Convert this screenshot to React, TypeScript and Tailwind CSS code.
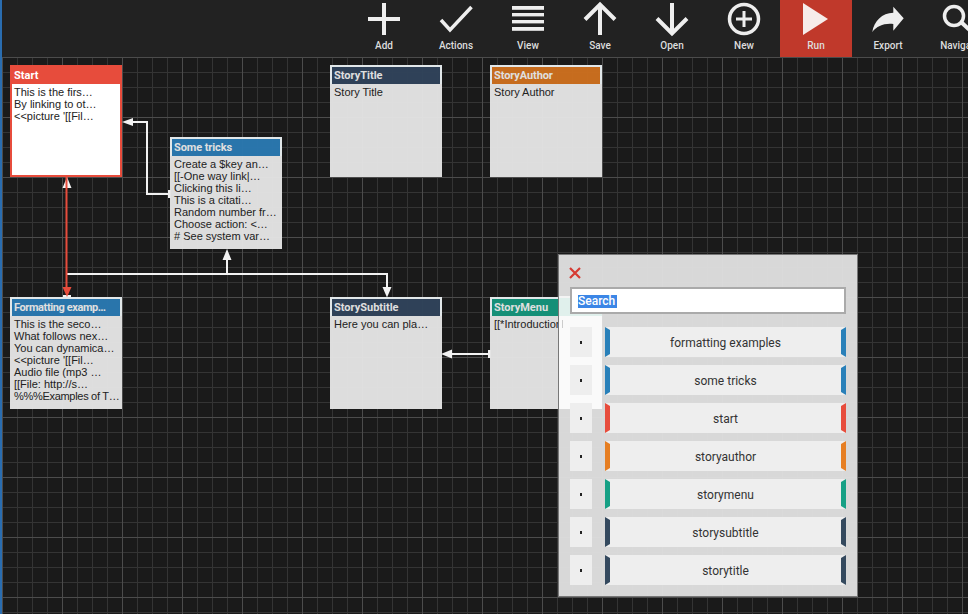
import React from "react";

const ico = "w-[36px] h-[36px] mt-[1px] shrink-0 overflow-visible";

const tools: { label: string; active?: boolean; icon: React.ReactNode }[] = [
  {
    label: "Add",
    icon: (
      <svg viewBox="0 0 36 36" className={ico} stroke="#eeeeee" strokeWidth="4" fill="none">
        <path d="M18 2V34M2 18H34" />
      </svg>
    ),
  },
  {
    label: "Actions",
    icon: (
      <svg viewBox="0 0 36 36" className={ico} stroke="#eeeeee" strokeWidth="3.5" fill="none">
        <path d="M3 19L12 29L33.5 6" />
      </svg>
    ),
  },
  {
    label: "View",
    icon: (
      <svg viewBox="0 0 36 36" className={ico} fill="#eeeeee">
        <rect x="2" y="5" width="32" height="3.8" />
        <rect x="2" y="12" width="32" height="3.4" />
        <rect x="2" y="19" width="32" height="3.4" />
        <rect x="2" y="26" width="32" height="3.8" />
      </svg>
    ),
  },
  {
    label: "Save",
    icon: (
      <svg viewBox="0 0 36 36" className={ico} stroke="#eeeeee" strokeWidth="4" fill="none">
        <path d="M18 4V34M3 18.5L18 3.5L33 18.5" />
      </svg>
    ),
  },
  {
    label: "Open",
    icon: (
      <svg viewBox="0 0 36 36" className={ico} stroke="#eeeeee" strokeWidth="4" fill="none">
        <path d="M18 2V32M3 17.5L18 32.5L33 17.5" />
      </svg>
    ),
  },
  {
    label: "New",
    icon: (
      <svg viewBox="0 0 36 36" className={ico} stroke="#eeeeee" fill="none">
        <circle cx="18" cy="18" r="14.5" strokeWidth="3.5" />
        <path d="M18 10V26M10 18H26" strokeWidth="3" />
      </svg>
    ),
  },
  {
    label: "Run",
    active: true,
    icon: (
      <svg viewBox="0 0 36 36" className={ico} fill="#f6ecea">
        <polygon points="5,2 30,18 5,34" />
      </svg>
    ),
  },
  {
    label: "Export",
    icon: (
      <svg viewBox="0 0 36 36" className={ico} fill="#eeeeee">
        <path d="M23.3 5.7L33.7 17.3L23.3 29.7V23C14 22 7 25 2.3 31C4 20 12 12 23.3 11.7Z" />
      </svg>
    ),
  },
  {
    label: "Navigate",
    icon: (
      <svg viewBox="0 0 36 36" className={ico} stroke="#eeeeee" fill="none">
        <circle cx="12" cy="15" r="9.5" strokeWidth="3.5" />
        <path d="M19 21L34 35" strokeWidth="4" />
      </svg>
    ),
  },
];

type NodeData = {
  title: string;
  pos: string;
  head: string;
  lines: string[];
  selected?: boolean;
};

const nodes: NodeData[] = [
  {
    title: "Start",
    pos: "left-[8px] top-[8px]",
    head: "bg-[#e74c3c]",
    selected: true,
    lines: ["This is the firs…", "By linking to ot…", "<<picture '[[Fil…"],
  },
  {
    title: "Some tricks",
    pos: "left-[168px] top-[80px]",
    head: "bg-[#2a78b0] tracking-[-0.1px]",
    lines: [
      "Create a $key an…",
      "[[-One way link|…",
      "Clicking this li…",
      "This is a citati…",
      "Random number fr…",
      "Choose action: <…",
      "# See system var…",
    ],
  },
  {
    title: "StoryTitle",
    pos: "left-[328px] top-[8px]",
    head: "bg-[#30435a]",
    lines: ["Story Title"],
  },
  {
    title: "StoryAuthor",
    pos: "left-[488px] top-[8px]",
    head: "bg-[#cc6f1f] tracking-[-0.1px]",
    lines: ["Story Author"],
  },
  {
    title: "Formatting examp…",
    pos: "left-[8px] top-[240px]",
    head: "bg-[#2a78b0] tracking-[-0.4px]",
    lines: [
      "This is the seco…",
      "What follows nex…",
      "You can dynamica…",
      "<<picture '[[Fil…",
      "Audio file (mp3 …",
      "[[File: http://s…",
      "%%%Examples of T…",
    ],
  },
  {
    title: "StorySubtitle",
    pos: "left-[328px] top-[240px]",
    head: "bg-[#30435a]",
    lines: ["Here you can pla…"],
  },
  {
    title: "StoryMenu",
    pos: "left-[488px] top-[240px]",
    head: "bg-[#15937a]",
    lines: ["[[*Introduction|…"],
  },
];

function StoryNode({ n }: { n: NodeData }) {
  return (
    <div
      className={`absolute w-[112px] h-[112px] font-['Liberation_Sans',Arial,sans-serif] text-[11px] leading-[12px] ${n.pos} ${
        n.selected ? "bg-white border-2 border-[#e74c3c]" : "bg-[#e4e4e4] opacity-[0.97]"
      }`}
    >
      <div
        className={`font-['Roboto',sans-serif] font-bold text-[#e6e6e6] whitespace-nowrap flex items-center ${n.head} ${
          n.selected ? "h-[17px] px-[2px] text-white" : "h-[19px] pl-[2px] border-2 border-b-0 border-[#e8eef0]"
        }`}
      >
        {n.title}
      </div>
      <div className="text-[#222222] pl-[4px] pt-[2px]">
        {n.lines.map((l) => (
          <div
            key={l}
            className={`whitespace-nowrap ${n.selected ? "-ml-[2px]" : ""} ${l.startsWith("%%%") ? "tracking-[-0.3px]" : ""}`}
          >
            {l}
          </div>
        ))}
      </div>
    </div>
  );
}

const items: { label: string; color: string }[] = [
  { label: "formatting examples", color: "border-l-[#2980b9] border-r-[#2980b9]" },
  { label: "some tricks", color: "border-l-[#2980b9] border-r-[#2980b9]" },
  { label: "start", color: "border-l-[#e74c3c] border-r-[#e74c3c]" },
  { label: "storyauthor", color: "border-l-[#e67e22] border-r-[#e67e22]" },
  { label: "storymenu", color: "border-l-[#16a085] border-r-[#16a085]" },
  { label: "storysubtitle", color: "border-l-[#34495e] border-r-[#34495e]" },
  { label: "storytitle", color: "border-l-[#34495e] border-r-[#34495e]" },
];

function Edges() {
  return (
    <svg viewBox="2 57 966 557" className="absolute left-0 top-0 w-[966px] h-[557px]" fill="none">
      <g stroke="#f2f2f2" strokeWidth="2">
        <path d="M170 194H147V122H130" />
        <path d="M66 274H387V289" />
        <path d="M227 274V258" />
        <path d="M490 354H450" />
      </g>
      <g fill="#f2f2f2">
        <polygon points="122,122 133,118 133,126" />
        <polygon points="387,297.5 382.5,287 391.5,287" />
        <polygon points="227,249 222.5,260 231.5,260" />
        <polygon points="441,354 452,349.5 452,358.5" />
        <polygon points="67,177 62.5,188 71.5,188" />
        <rect x="168" y="190" width="3" height="8" />
        <rect x="488" y="350" width="3" height="8" />
        <rect x="63" y="295" width="8" height="2" />
      </g>
      <path d="M66.5 177V292" stroke="#e74c3c" strokeWidth="2" />
      <polygon points="67,297 62.5,287 71.5,287" fill="#e74c3c" />
    </svg>
  );
}

export default function App() {
  return (
    <div className="relative w-[968px] h-[614px] overflow-hidden flex flex-col bg-[#1a1a1a] border-l-2 border-[#2a6db0] font-['Roboto',sans-serif]">
      <div className="h-[57px] shrink-0 bg-[#222222] flex pl-[346px]">
        {tools.map((t) => (
          <div
            key={t.label}
            className={`w-[72px] h-[57px] shrink-0 flex flex-col items-center ${t.active ? "bg-[#c0392b]" : ""}`}
          >
            {t.icon}
            <span className="text-[10px] leading-[12px] mt-[3px] font-medium text-[#dddddd] whitespace-nowrap">{t.label}</span>
          </div>
        ))}
      </div>
      <div className="relative flex-1 bg-[#1a1a1a] bg-[linear-gradient(#4c4c4c_1px,transparent_1px),linear-gradient(90deg,#4c4c4c_1px,transparent_1px),linear-gradient(#343434_1px,transparent_1px),linear-gradient(90deg,#343434_1px,transparent_1px)] bg-[size:60px_60px,60px_60px,15px_15px,15px_15px]">
        <Edges />
        {nodes.map((n) => (
          <StoryNode key={n.title} n={n} />
        ))}

        <div className="absolute left-[556px] top-[197px] w-[300px] h-[343px] border border-[#777777] bg-[#e0e0e0]/[0.96] px-[11px] flex flex-col">
          <div className="absolute left-0 top-[42px] w-[43px] h-[19px] bg-[#e0f0ec]" />
          <div className="absolute left-0 top-[41px] w-[43px] h-[2px] bg-[#f4f4f4]" />
          <div className="absolute left-0 top-[61px] w-[43px] h-[93px] bg-[#fafafa]" />
          <div className="absolute left-[3px] top-[65px] w-px h-[8px] bg-[#cccccc]" />

          <svg viewBox="0 0 12 12" className="relative mt-[12px] ml-[-1px] w-[12px] h-[12px] shrink-0" stroke="#d63a32" strokeWidth="2.2" fill="none">
            <path d="M1 1L11 11M11 1L1 11" />
          </svg>

          <div className="relative mt-[8px] h-[27px] shrink-0 bg-white border-2 border-[#aaaaaa] flex items-center pl-[6px] pt-[1px]">
            <span className="bg-[#3b86e6] text-white text-[12px] leading-[13px] font-medium pr-[2px]">Search</span>
          </div>

          <div className="relative mt-[13px] flex flex-col gap-[8px]">
            {items.map((it) => (
              <div key={it.label} className="flex h-[30px] gap-[13px]">
                <div className="w-[22px] bg-[#eeeeee] flex items-center justify-center">
                  <div className="w-[2px] h-[3px] bg-[#222222]" />
                </div>
                <div
                  className={`flex-1 bg-[#eeeeee] border-l-[5px] border-r-[5px] border-t-[3px] border-b-[3px] border-t-[#eeeeee] border-b-[#eeeeee] ${it.color} flex items-center justify-center text-[12px] leading-[14px] pt-[1px] text-[#333333]`}
                >
                  {it.label}
                </div>
              </div>
            ))}
          </div>
        </div>
      </div>
    </div>
  );
}
